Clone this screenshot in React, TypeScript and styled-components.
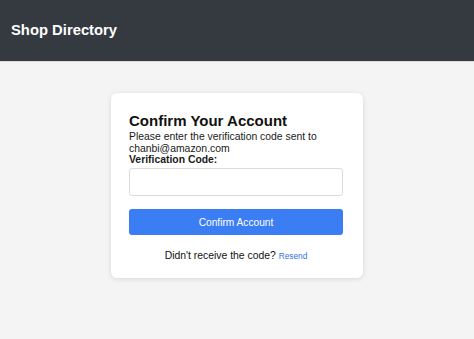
import React from "react";
import styled, { createGlobalStyle } from "styled-components";

const Global = createGlobalStyle`
  html, body { margin: 0; padding: 0; background: #f4f4f4; }
  body { font-family: "Liberation Sans", Arial, Helvetica, sans-serif; color: #111; }
  * { box-sizing: border-box; }
`;

const Page = styled.div`
  min-height: 339px;
  background: #f4f4f4;
`;

const Header = styled.header`
  height: 62px;
  background: #343a40;
  border-bottom: 1px solid #d9dadb;
  display: flex;
  align-items: center;
  padding: 0 11px;
`;

const Brand = styled.h1`
  margin: 0;
  font-size: 14.8px;
  font-weight: 700;
  color: #fff;
  line-height: 1;
`;

const Main = styled.main`
  display: flex;
  justify-content: center;
  padding-top: 31px;
`;

const Card = styled.section`
  width: 252px;
  background: #fff;
  border-radius: 6px;
  box-shadow: 0 1px 5px rgba(0, 0, 0, 0.12);
  padding: 18px 20px 16px 18px;
  display: flex;
  flex-direction: column;
`;

const Title = styled.h2`
  margin: 0 0 1px;
  font-size: 15px;
  font-weight: 700;
  line-height: 19px;
  color: #111;
`;

const Text = styled.p`
  margin: 0;
  font-size: 10.4px;
  line-height: 11.7px;
  color: #1a1a1a;
`;

const Label = styled.label`
  font-size: 10.4px;
  line-height: 11.7px;
  font-weight: 700;
  color: #1a1a1a;
`;

const Input = styled.input`
  margin-top: 2px;
  height: 28px;
  width: 100%;
  border: 1px solid #dcdcdc;
  border-radius: 3px;
  background: #fff;
  outline: none;
  font: inherit;
  font-size: 10.4px;
  padding: 0 8px;
`;

const Button = styled.button`
  margin-top: 13px;
  height: 26px;
  width: 100%;
  border: none;
  border-radius: 3px;
  background: #3b7ef3;
  color: #fff;
  font-family: inherit;
  font-size: 10.2px;
  cursor: pointer;
`;

const Footer = styled.p`
  margin: 15px 0 0;
  text-align: center;
  font-size: 10.4px;
  line-height: 12px;
  color: #111;
`;

const Link = styled.a`
  color: #2f74e6;
  font-size: 8.3px;
  text-decoration: none;
`;

export default function App() {
  return (
    <Page>
      <Global />
      <Header>
        <Brand>Shop Directory</Brand>
      </Header>
      <Main>
        <Card>
          <Title>Confirm Your Account</Title>
          <Text>Please enter the verification code sent to chanbi@amazon.com</Text>
          <Label htmlFor="code">Verification Code:</Label>
          <Input id="code" type="text" />
          <Button type="button">Confirm Account</Button>
          <Footer>
            Didn't receive the code? <Link href="#">Resend</Link>
          </Footer>
        </Card>
      </Main>
    </Page>
  );
}
